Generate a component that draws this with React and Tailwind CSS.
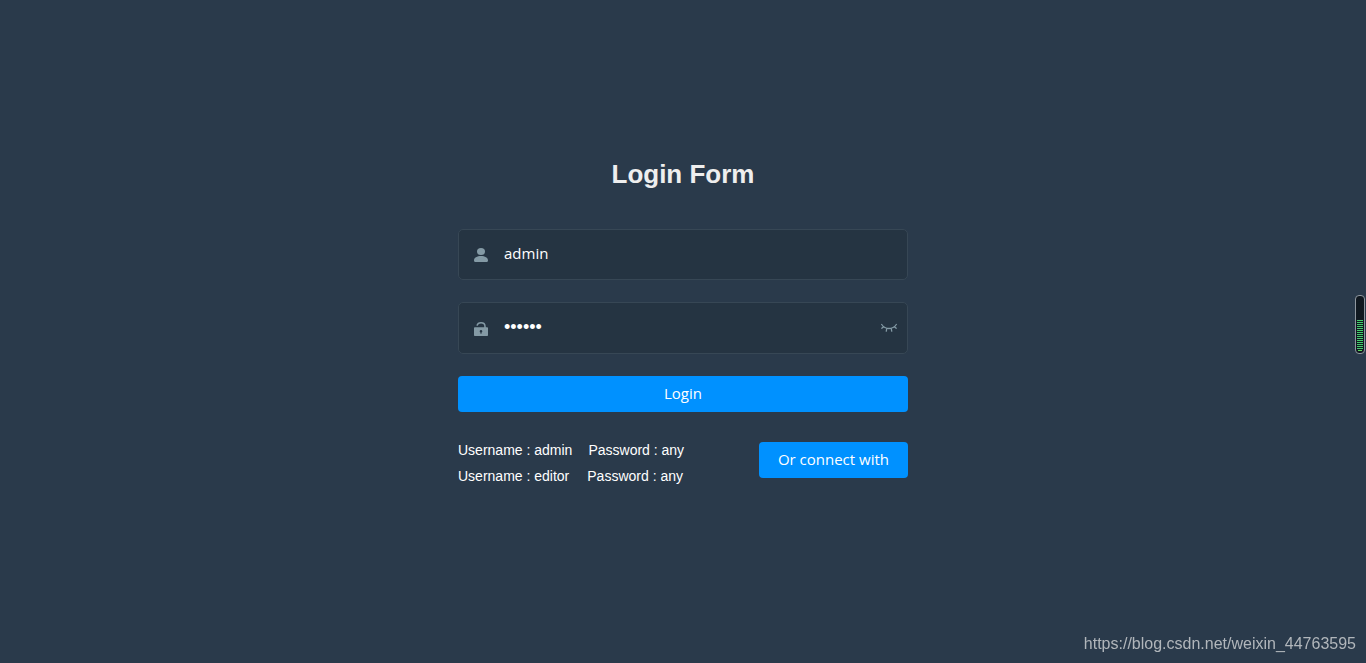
import React, { useState } from 'react';

const accounts = [
  { username: 'admin', gap: 'mr-4' },
  { username: 'editor', gap: 'mr-[18px]' }
];

const bars = Array.from({ length: 16 }, (_, i) => i);

function UserIcon() {
  return (
    <svg className="w-3.5 h-3.5" viewBox="0 0 14 14" fill="currentColor" aria-hidden="true">
      <ellipse cx="7" cy="3.5" rx="4" ry="3.5" />
      <path d="M7 7.900c4 0 7 1.800 7 4.300 0 1.200-.5 1.800-1.500 1.800h-11C.5 14 0 13.400 0 12.200c0-2.500 3-4.300 7-4.300z" />
    </svg>
  );
}

function LockIcon() {
  return (
    <svg className="w-3.5 h-3.5" viewBox="0 0 14 14" aria-hidden="true">
      <path d="M3 3.600C3.500 1.700 5 .8 7 .8c2.500 0 4 1.400 4 3.600V6" fill="none" stroke="currentColor" strokeWidth="1.500" />
      <path
        fill="currentColor"
        fillRule="evenodd"
        d="M.8 5.200h12.400c.5 0 .8.300.8.800v7.200c0 .5-.3.800-.8.800H.8c-.5 0-.8-.3-.8-.8V6c0-.5.3-.8.8-.8zM7 8a1.300 1.300 0 0 0-.5 2.500v1.300h1v-1.300A1.300 1.300 0 0 0 7 8z"
      />
    </svg>
  );
}

function EyeClosedIcon() {
  return (
    <svg className="w-4 h-4" viewBox="0 0 16 16" fill="none" stroke="currentColor" strokeWidth="1.3" strokeLinecap="round" aria-hidden="true">
      <path d="M.7 4.500C2.400 7 5 8.500 8 8.500s5.600-1.500 7.300-4M2.700 6.600.8 8.200M13.300 6.600l1.900 1.600M5.800 8.300l-.5 2.800M10.200 8.300l.5 2.800" />
    </svg>
  );
}

export default function App() {
  const [username, setUsername] = useState('admin');
  const [password, setPassword] = useState('111111');
  const [showPassword, setShowPassword] = useState(false);

  return (
    <div className="min-h-screen bg-[#2a3a4b] font-['Liberation_Sans',Arial,sans-serif]">
      <form className="max-w-[450px] mx-auto pt-40" onSubmit={(e) => e.preventDefault()}>
        <h1 className="mb-10 text-center text-[26px] leading-[29px] font-bold text-[#eeeeee]">Login Form</h1>

        {/* Username */}
        <div className="mb-[22px] flex h-[51px] items-center rounded-[5px] border border-[#374755] bg-[#253442] text-[#849aa5]">
          <label htmlFor="username" className="pl-[15px]">
            <UserIcon />
          </label>
          <input
            id="username"
            type="text"
            aria-label="Username"
            value={username}
            onChange={(e) => setUsername(e.target.value)}
            className="min-w-0 flex-1 bg-transparent px-4 pb-0.5 font-['Open_Sans',sans-serif] text-[15px] text-white outline-none"
          />
        </div>

        {/* Password */}
        <div className="mb-[22px] flex h-[52px] items-center rounded-[5px] border border-[#374755] bg-[#253442] text-[#849aa5]">
          <label htmlFor="password" className="pl-[15px] pt-0.5">
            <LockIcon />
          </label>
          <input
            id="password"
            type={showPassword ? 'text' : 'password'}
            aria-label="Password"
            value={password}
            onChange={(e) => setPassword(e.target.value)}
            className="min-w-0 flex-1 bg-transparent px-4 pb-0.5 text-lg text-white outline-none"
          />
          <button
            type="button"
            aria-label="Show password"
            onClick={() => setShowPassword(!showPassword)}
            className="pr-2.5"
          >
            <EyeClosedIcon />
          </button>
        </div>

        <button
          type="submit"
          className="mb-[30px] block h-9 w-full rounded-[4px] bg-[#0091ff] pb-0.5 font-['Open_Sans',sans-serif] text-[15px] text-white"
        >
          Login
        </button>

        <div className="flex items-start justify-between">
          <div className="text-sm leading-4 text-white">
            {accounts.map((account) => (
              <div key={account.username} className="mb-2.5">
                <span className={account.gap}>Username : {account.username}</span>
                <span>Password : any</span>
              </div>
            ))}
          </div>
          <button
            type="button"
            className="h-9 rounded-[4px] bg-[#0091ff] px-[19px] pb-0.5 font-['Open_Sans',sans-serif] text-[15px] text-white"
          >
            Or connect with
          </button>
        </div>
      </form>

      {/* Level meter */}
      <div className="fixed right-px top-[295px] flex h-[59px] w-2.5 flex-col items-center justify-end rounded-[4px] border border-[#8f979f] bg-[#101820] pb-0.5">
        {bars.map((i) => (
          <span key={i} className={i === 15 ? 'h-px w-1 bg-[#5ad65a]' : 'mb-px h-px w-1.5 bg-[#43cf6c]'} />
        ))}
      </div>

      <a
        href="https://blog.csdn.net/weixin_44763595"
        className="fixed bottom-2.5 right-2.5 text-base leading-[18px] text-[#b1b6bb]"
      >
        https://blog.csdn.net/weixin_44763595
      </a>
    </div>
  );
}
